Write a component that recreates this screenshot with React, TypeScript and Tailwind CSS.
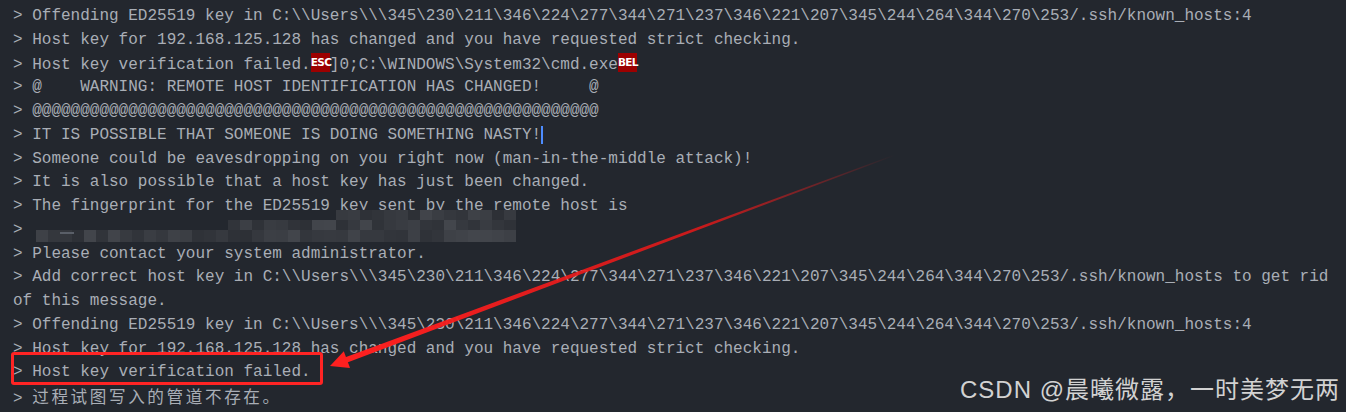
import React from "react";

const bs = "\\";
const octs = ["345", "230", "211", "346", "224", "277", "344", "271", "237", "346", "221", "207", "345", "244", "264", "344", "270", "253"];
const userPath = "C:" + bs + bs + "Users" + bs + bs + bs + octs.join(bs) + "/.ssh/known_hosts";

const Ctrl = ({ label }: { label: string }) => (
  <span className="inline-block w-[19.2px] h-[19px] align-[3px] bg-[#9c0000] text-white text-[10.5px] font-bold leading-[19px] text-center tracking-[-0.6px] font-['DejaVu_Sans',sans-serif]">
    {label}
  </span>
);

// pixelated block standing in for the redacted fingerprint
const Mosaic = () => {
  const cells: { x: number; y: number; c: string }[] = [];
  let seed = 7;
  const rnd = () => {
    seed = (seed * 9301 + 49297) % 233280;
    return seed / 233280;
  };
  for (let y = 0; y < 3; y++) {
    for (let x = 0; x < 40; x++) {
      const px = x * 12;
      if (y === 0 && px < 300) continue;
      if (y === 1 && px < 190) continue;
      const g = 44 + Math.floor(rnd() * 24);
      cells.push({ x: px, y: y * 10, c: `rgb(${g},${g + 3},${g + 9})` });
    }
  }
  return (
    <svg className="absolute left-[36px] top-[210px]" width="480" height="32" viewBox="0 0 480 32">
      {cells.map((k, i) => (
        <rect key={i} x={k.x} y={k.y} width="12" height={k.y === 20 ? 12 : 10} fill={k.c} />
      ))}
      <rect x="24" y="22" width="14" height="2" fill="#5a5f68" />
    </svg>
  );
};

const Arrow = () => (
  <svg className="absolute left-0 top-0 pointer-events-none" width="1346" height="412" viewBox="0 0 1346 412">
    <defs>
      <linearGradient id="shaft" x1="895" y1="155" x2="345" y2="360" gradientUnits="userSpaceOnUse">
        <stop offset="0" stopColor="#ff2020" stopOpacity="0" />
        <stop offset="0.35" stopColor="#e41818" stopOpacity="0.85" />
        <stop offset="1" stopColor="#ff2020" />
      </linearGradient>
    </defs>
    <polygon points="895.2,155.5 894.8,154.5 344,357.8 346,363" fill="url(#shaft)" />
    <polygon points="330,366 343.8,351.3 350.1,368.1" fill="#ff2020" />
  </svg>
);

const Line = ({ children }: { children?: React.ReactNode }) => (
  <div className="h-[23.75px] leading-[23.75px] whitespace-pre">{children}</div>
);

export default function App() {
  return (
    <div className="relative w-[1346px] h-[412px] overflow-hidden bg-[#23272e] text-[#a9aeb6] text-[16px] font-['Liberation_Mono','Noto_Sans_CJK_SC',monospace]">
      <div className="pl-[13px] pt-[5px]">
        <Line>{`> Offending ED25519 key in ${userPath}:4`}</Line>
        <Line>{"> Host key for 192.168.125.128 has changed and you have requested strict checking."}</Line>
        <Line>
          {"> Host key verification failed."}
          <Ctrl label="ESC" />
          {"]0;C:" + bs + "WINDOWS" + bs + "System32" + bs + "cmd.exe"}
          <Ctrl label="BEL" />
        </Line>
        <Line>{"> @    WARNING: REMOTE HOST IDENTIFICATION HAS CHANGED!     @"}</Line>
        <Line>{"> " + "@".repeat(59)}</Line>
        <Line>
          {"> IT IS POSSIBLE THAT SOMEONE IS DOING SOMETHING NASTY!"}
          <span className="inline-block w-[2px] h-[18px] align-[-5px] bg-[#4d8cff]" />
        </Line>
        <Line>{"> Someone could be eavesdropping on you right now (man-in-the-middle attack)!"}</Line>
        <Line>{"> It is also possible that a host key has just been changed."}</Line>
        <Line>{"> The fingerprint for the ED25519 key sent by the remote host is"}</Line>
        <Line>{"> "}</Line>
        <Line>{"> Please contact your system administrator."}</Line>
        <Line>{`> Add correct host key in ${userPath} to get rid`}</Line>
        <Line>{"of this message."}</Line>
        <Line>{`> Offending ED25519 key in ${userPath}:4`}</Line>
        <Line>{"> Host key for 192.168.125.128 has changed and you have requested strict checking."}</Line>
        <Line>{"> Host key verification failed."}</Line>
        <Line>
          {"> "}
          <span className="tracking-[2.6px] text-[16.6px] font-['Noto_Sans_CJK_SC',sans-serif]">过程试图写入的管道不存在。</span>
        </Line>
      </div>

      <Mosaic />

      <div className="absolute left-[11px] top-[352px] w-[312px] h-[33px] border-[3px] border-[#ff2424] rounded-[3px]" />
      <Arrow />

      <div className="absolute right-[6px] top-[376px] text-[24px] leading-[28px] tracking-[1px] text-[#d2d2d2] font-['Liberation_Sans','Noto_Sans_CJK_SC',sans-serif]">
        CSDN @晨曦微露，一时美梦无两
      </div>
    </div>
  );
}
